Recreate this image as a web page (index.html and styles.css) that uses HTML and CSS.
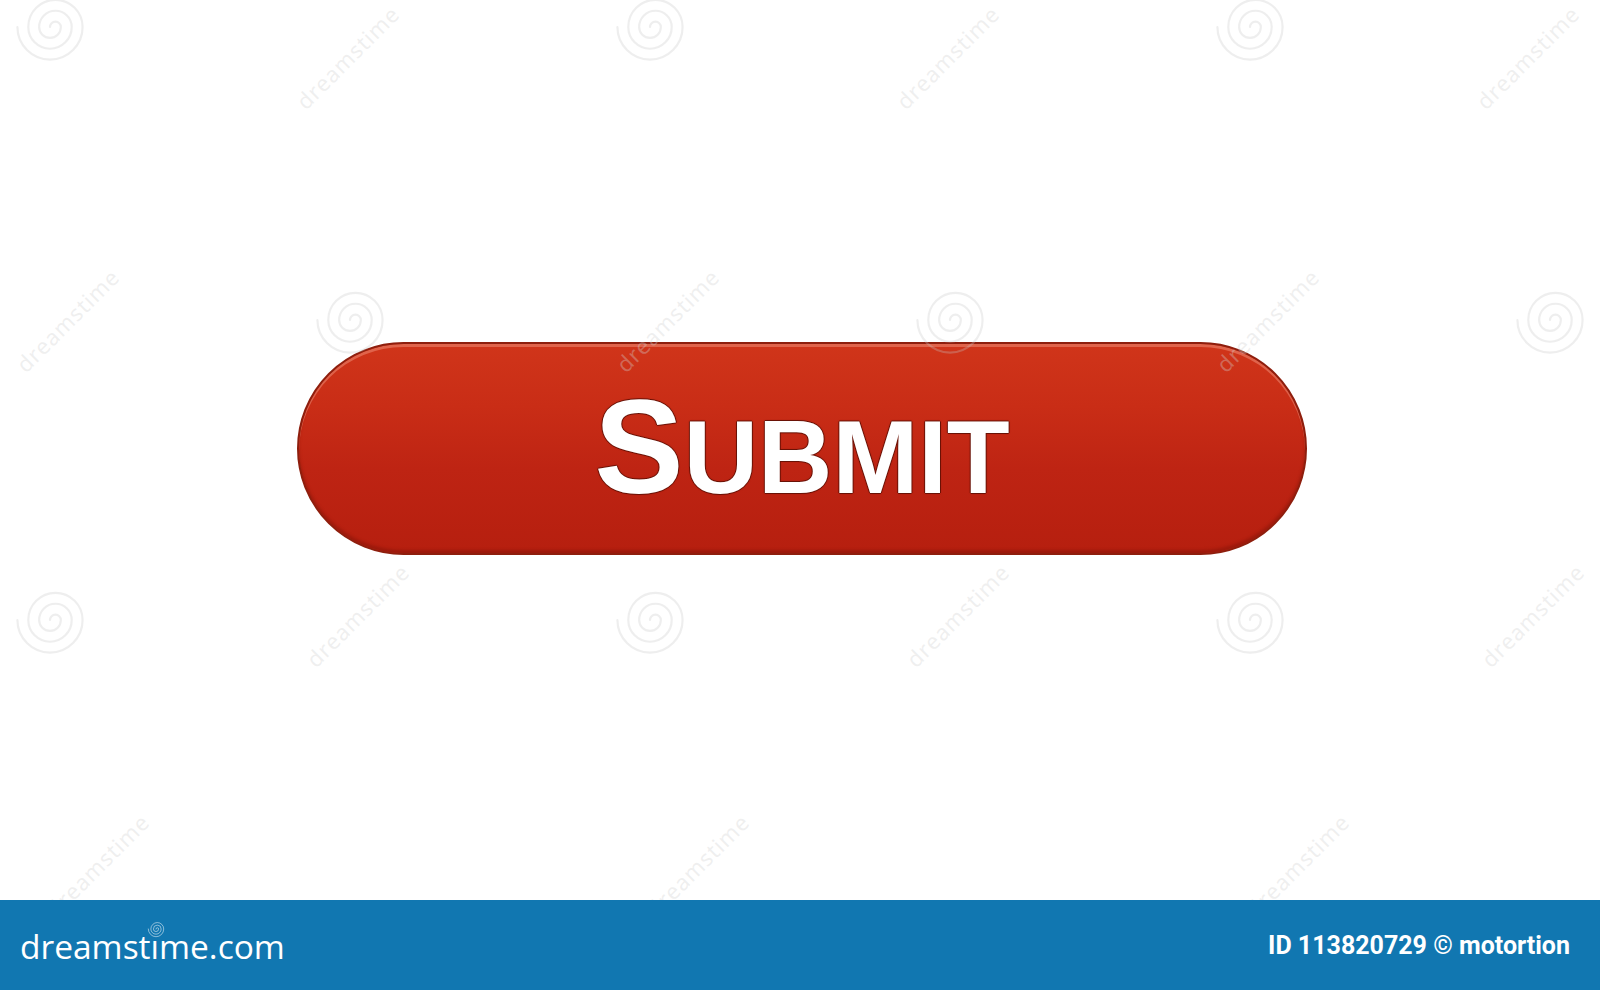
FILE: index.html
```html
<!DOCTYPE html>
<html lang="en">
<head>
  <meta charset="UTF-8">
  <meta name="viewport" content="width=device-width, initial-scale=1.0">
  <title>Submit button</title>
  <link rel="stylesheet" href="styles.css">
</head>
<body>
  <svg class="defs" aria-hidden="true">
    <symbol id="spiral" viewBox="0 0 84 84">
      <path d="M42 42 a6 6 0 0 1 12 0 a12 12 0 0 1 -24 0 a18 18 0 0 1 36 0 a24 24 0 0 1 -48 0 a30 30 0 0 1 60 0 a36 36 0 0 1 -72 0" fill="none" stroke="currentColor" stroke-width="2.4" stroke-linecap="round"/>
    </symbol>
  </svg>

  <main class="stage">
    <button class="pill" type="button">
      <span class="label"><span class="cap">S</span><span class="rest">UBMIT</span></span>
    </button>
  </main>

  <footer class="credit">
    <div class="brand">dreamst<span class="dotless">ı<svg class="brand-swirl"><use href="#spiral"/></svg></span>me.com</div>
    <div class="meta">ID 113820729 &copy; motortion</div>
  </footer>

  <!-- stock watermark layer: spirals and slanted wordmarks -->
  <div class="watermark" aria-hidden="true">
    <svg class="wm-spiral" style="left:12px;top:-11px"><use href="#spiral"/></svg>
    <svg class="wm-spiral" style="left:612px;top:-11px"><use href="#spiral"/></svg>
    <svg class="wm-spiral" style="left:1212px;top:-11px"><use href="#spiral"/></svg>
    <svg class="wm-spiral" style="left:312px;top:282px"><use href="#spiral"/></svg>
    <svg class="wm-spiral" style="left:912px;top:282px"><use href="#spiral"/></svg>
    <svg class="wm-spiral" style="left:1512px;top:282px"><use href="#spiral"/></svg>
    <svg class="wm-spiral" style="left:12px;top:582px"><use href="#spiral"/></svg>
    <svg class="wm-spiral" style="left:612px;top:582px"><use href="#spiral"/></svg>
    <svg class="wm-spiral" style="left:1212px;top:582px"><use href="#spiral"/></svg>

    <span class="wm-text" style="left:280px;top:42px">dreamstime</span>
    <span class="wm-text" style="left:880px;top:42px">dreamstime</span>
    <span class="wm-text" style="left:1460px;top:42px">dreamstime</span>
    <span class="wm-text" style="left:0px;top:305px">dreamstime</span>
    <span class="wm-text" style="left:600px;top:305px">dreamstime</span>
    <span class="wm-text" style="left:1200px;top:305px">dreamstime</span>
    <span class="wm-text" style="left:290px;top:600px">dreamstime</span>
    <span class="wm-text" style="left:890px;top:600px">dreamstime</span>
    <span class="wm-text" style="left:1465px;top:600px">dreamstime</span>
    <span class="wm-text" style="left:30px;top:850px">dreamstime</span>
    <span class="wm-text" style="left:630px;top:850px">dreamstime</span>
    <span class="wm-text" style="left:1230px;top:850px">dreamstime</span>
  </div>
</body>
</html>
```

FILE: styles.css
```css
html, body { margin: 0; padding: 0; }
body { width: 1600px; height: 990px; background: #fff; overflow: hidden; position: relative; font-family: "Liberation Sans", Arial, sans-serif; }
.defs { position: absolute; width: 0; height: 0; }

.stage { height: 900px; display: flex; align-items: center; justify-content: center; padding: 0 0 3px 4px; box-sizing: border-box; }

.pill {
  width: 1010px; height: 213px; border-radius: 107px;
  border: 2px solid #8e1e0d;
  background: linear-gradient(#d0351a 0%, #c92d16 30%, #be2413 60%, #b61f0f 100%);
  box-shadow: inset 0 3px 0 rgba(255, 190, 170, 0.35), inset 0 -3px 3px rgba(110, 15, 5, 0.35);
  display: flex; align-items: center; justify-content: center;
  padding: 0 0 4px 0; cursor: pointer;
  font-family: "Liberation Sans", Arial, sans-serif; font-weight: bold; color: #fff;
  text-shadow: 1px 0 0 #6a1206, -1px 0 0 #6a1206, 0 1px 0 #6a1206, 0 -1px 0 #6a1206, 0 0 2px #6a1206;
}
.label { line-height: 1; }
.cap { font-size: 134px; }
.rest { font-size: 103px; }

.credit {
  position: relative; z-index: 2;
  height: 90px; background: #1177b1; color: #fff;
  display: flex; align-items: center; justify-content: space-between;
  padding: 0 30px 0 20px;
}
.brand { font-family: "Open Sans", sans-serif; font-weight: 500; font-size: 33.5px; padding-top: 2px; }
.dotless { position: relative; }
.brand-swirl { position: absolute; left: -4px; top: -3px; width: 18px; height: 18px; color: #fff; }
.brand-swirl path { stroke-width: 9; }
.meta { font-family: Roboto, sans-serif; font-weight: bold; font-size: 25px; }

.watermark { position: absolute; inset: 0; pointer-events: none; overflow: hidden; z-index: 1; }
.wm-spiral { position: absolute; width: 76px; height: 76px; color: rgba(200, 200, 200, 0.3); }
.wm-text {
  position: absolute; font-family: "Noto Sans", sans-serif; font-size: 22px; letter-spacing: 1px;
  color: rgba(210, 210, 210, 0.35); transform: rotate(-45deg); transform-origin: center;
}
```
